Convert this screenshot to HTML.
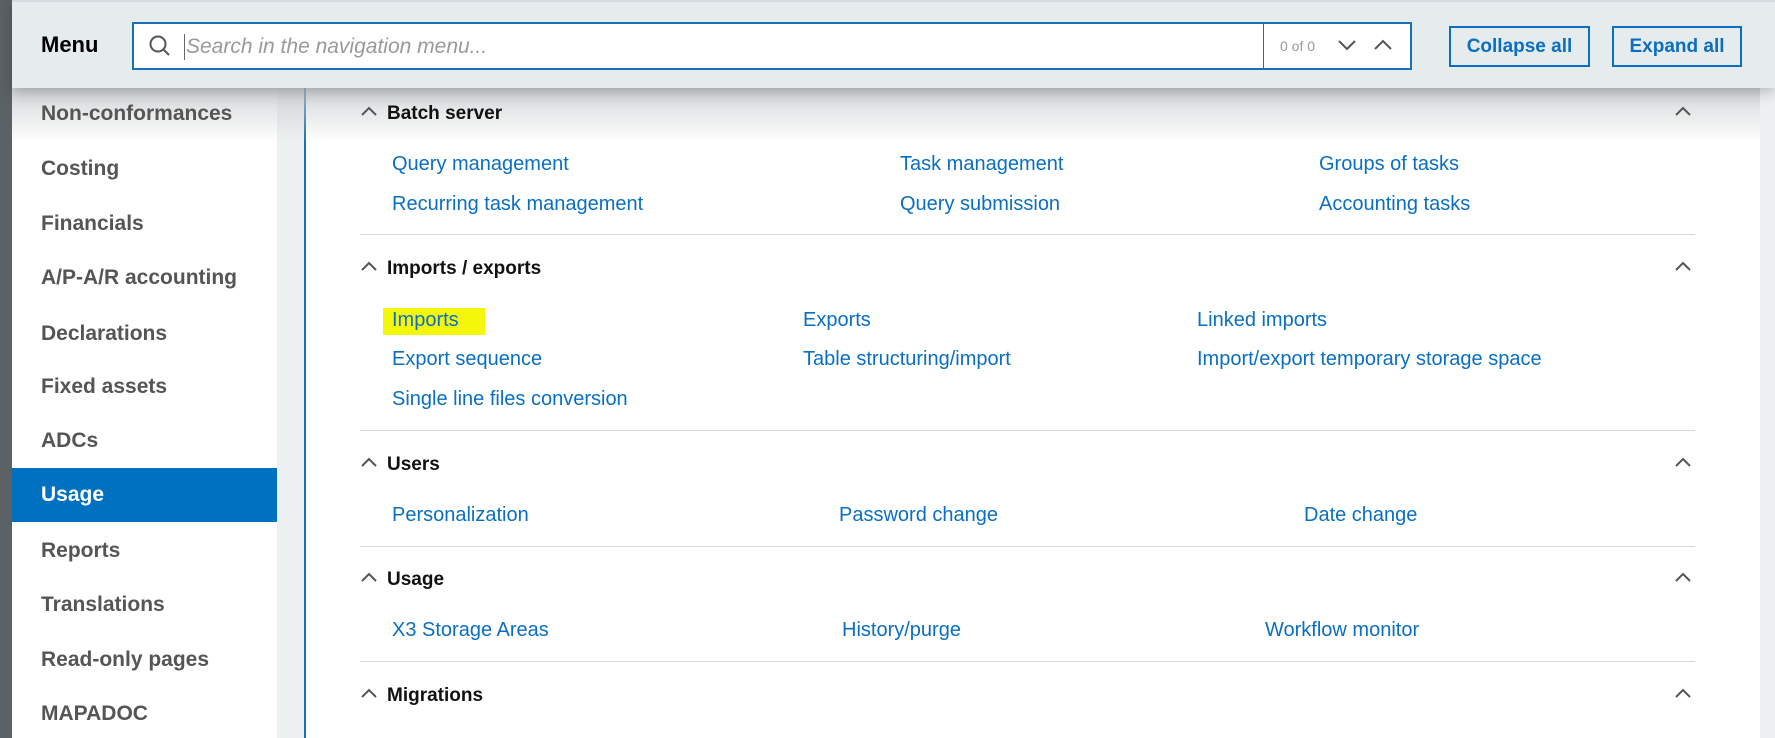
<!DOCTYPE html>
<html><head><style>
*{margin:0;padding:0;box-sizing:border-box}
body{width:1775px;height:738px;overflow:hidden;background:#eef1f2;font-family:"Liberation Sans",sans-serif;position:relative}
.abs{position:absolute}
#strip{left:0;top:0;width:12px;height:738px;background:#5b6266}
#header{left:12px;top:0;width:1763px;height:88px;background:#e6ebed;border-top:2px solid #d5dbde;box-shadow:0 4px 14px rgba(0,0,0,.25);z-index:5}
#menu{left:41px;top:30px;font-weight:bold;font-size:22px;color:#000}
#search{left:132px;top:20px;width:1280px;height:48px;background:#fff;border:2px solid #1a6fb5}
#search .ph{position:absolute;left:52px;top:11px;font-style:italic;color:#999;font-size:21px}
#search .caret{position:absolute;left:50px;top:10px;width:1px;height:26px;background:#666}
#search .div{position:absolute;left:1129px;top:0;width:1px;height:44px;background:#1a6fb5}
#search .cnt{position:absolute;left:1146px;top:14px;color:#999;font-size:14px}
.btn{top:24px;height:41px;border:2px solid #0a6fc2;color:#0a6fc2;font-weight:bold;font-size:19px;text-align:center;line-height:37px;background:#e6ebed}
#side{left:12px;top:88px;width:265px;height:650px;background:#fff}
.si{position:absolute;left:29px;font-weight:bold;font-size:21px;color:#555;z-index:3}
#hl{left:12px;top:468px;width:265px;height:54px;background:#0070c0}
#blue{left:304px;top:88px;width:2px;height:650px;background:#1a6fb5}
#content{left:306px;top:88px;width:1454px;height:650px;background:#fff}
#shade{left:12px;top:88px;width:1748px;height:55px;background:linear-gradient(rgba(200,204,206,.8),rgba(255,255,255,0));z-index:2}
.h{position:absolute;left:387px;font-weight:bold;font-size:19px;color:#111;z-index:3}
.l{position:absolute;font-size:20px;color:#0a6fc2;z-index:3}
.sep{position:absolute;left:360px;width:1335px;height:1px;background:#d3dadd}
svg.ch{position:absolute;z-index:3}
</style></head><body>
<div id="strip" class="abs"></div>
<div id="side" class="abs">
<div class="si" style="top:14px">Non-conformances</div>
<div class="si" style="top:69px">Costing</div>
<div class="si" style="top:124px">Financials</div>
<div class="si" style="top:178px">A/P-A/R accounting</div>
<div class="si" style="top:234px">Declarations</div>
<div class="si" style="top:287px">Fixed assets</div>
<div class="si" style="top:341px">ADCs</div>
<div class="si" style="top:451px">Reports</div>
<div class="si" style="top:505px">Translations</div>
<div class="si" style="top:560px">Read-only pages</div>
<div class="si" style="top:614px">MAPADOC</div>
</div>
<div id="hl" class="abs"><div class="si" style="left:29px;top:15px;color:#fff">Usage</div></div>
<div id="content" class="abs"></div>
<div id="blue" class="abs"></div>
<div id="shade" class="abs"></div>
<div class="abs" style="left:383px;top:308px;width:102px;height:27px;background:#f5f70a;z-index:2"></div>

<div class="h" style="top:103px">Batch server</div>
<div class="l" style="left:392px;top:153px">Query management</div>
<div class="l" style="left:900px;top:153px">Task management</div>
<div class="l" style="left:1319px;top:153px">Groups of tasks</div>
<div class="l" style="left:392px;top:193px">Recurring task management</div>
<div class="l" style="left:900px;top:193px">Query submission</div>
<div class="l" style="left:1319px;top:193px">Accounting tasks</div>
<div class="sep" style="top:234px"></div>

<div class="h" style="top:258px">Imports / exports</div>
<div class="l" style="left:392px;top:309px">Imports</div>
<div class="l" style="left:803px;top:309px">Exports</div>
<div class="l" style="left:1197px;top:309px">Linked imports</div>
<div class="l" style="left:392px;top:348px">Export sequence</div>
<div class="l" style="left:803px;top:348px">Table structuring/import</div>
<div class="l" style="left:1197px;top:348px">Import/export temporary storage space</div>
<div class="l" style="left:392px;top:388px">Single line files conversion</div>
<div class="sep" style="top:430px"></div>

<div class="h" style="top:454px">Users</div>
<div class="l" style="left:392px;top:504px">Personalization</div>
<div class="l" style="left:839px;top:504px">Password change</div>
<div class="l" style="left:1304px;top:504px">Date change</div>
<div class="sep" style="top:546px"></div>

<div class="h" style="top:569px">Usage</div>
<div class="l" style="left:392px;top:619px">X3 Storage Areas</div>
<div class="l" style="left:842px;top:619px">History/purge</div>
<div class="l" style="left:1265px;top:619px">Workflow monitor</div>
<div class="sep" style="top:661px"></div>

<div class="h" style="top:685px">Migrations</div>

<svg class="ch" style="left:360px;top:105px" width="18" height="12"><path d="M2 10 L9 3 L16 10" fill="none" stroke="#555" stroke-width="2"/></svg>
<svg class="ch" style="left:360px;top:260px" width="18" height="12"><path d="M2 10 L9 3 L16 10" fill="none" stroke="#555" stroke-width="2"/></svg>
<svg class="ch" style="left:360px;top:456px" width="18" height="12"><path d="M2 10 L9 3 L16 10" fill="none" stroke="#555" stroke-width="2"/></svg>
<svg class="ch" style="left:360px;top:571px" width="18" height="12"><path d="M2 10 L9 3 L16 10" fill="none" stroke="#555" stroke-width="2"/></svg>
<svg class="ch" style="left:360px;top:687px" width="18" height="12"><path d="M2 10 L9 3 L16 10" fill="none" stroke="#555" stroke-width="2"/></svg>
<svg class="ch" style="left:1674px;top:105px" width="18" height="12"><path d="M2 10 L9 3 L16 10" fill="none" stroke="#555" stroke-width="2"/></svg>
<svg class="ch" style="left:1674px;top:260px" width="18" height="12"><path d="M2 10 L9 3 L16 10" fill="none" stroke="#555" stroke-width="2"/></svg>
<svg class="ch" style="left:1674px;top:456px" width="18" height="12"><path d="M2 10 L9 3 L16 10" fill="none" stroke="#555" stroke-width="2"/></svg>
<svg class="ch" style="left:1674px;top:571px" width="18" height="12"><path d="M2 10 L9 3 L16 10" fill="none" stroke="#555" stroke-width="2"/></svg>
<svg class="ch" style="left:1674px;top:687px" width="18" height="12"><path d="M2 10 L9 3 L16 10" fill="none" stroke="#555" stroke-width="2"/></svg>

<div id="header" class="abs">
<div id="menu" class="abs" style="left:29px">Menu</div>
<div id="search" class="abs" style="left:120px">
<svg style="position:absolute;left:14px;top:10px" width="24" height="24"><circle cx="10" cy="10" r="7.5" fill="none" stroke="#555" stroke-width="2"/><path d="M15.5 15.5 L21 21" stroke="#555" stroke-width="2"/></svg>
<div class="caret"></div>
<div class="ph">Search in the navigation menu...</div>
<div class="div"></div>
<div class="cnt">0 of 0</div>
<svg style="position:absolute;left:1202px;top:13px" width="22" height="16"><path d="M3 4 L11 12 L19 4" fill="none" stroke="#555" stroke-width="2"/></svg>
<svg style="position:absolute;left:1238px;top:13px" width="22" height="16"><path d="M3 12 L11 4 L19 12" fill="none" stroke="#555" stroke-width="2"/></svg>
</div>
<div class="abs btn" style="left:1437px;width:141px">Collapse all</div>
<div class="abs btn" style="left:1600px;width:130px">Expand all</div>
</div>
</body></html>
